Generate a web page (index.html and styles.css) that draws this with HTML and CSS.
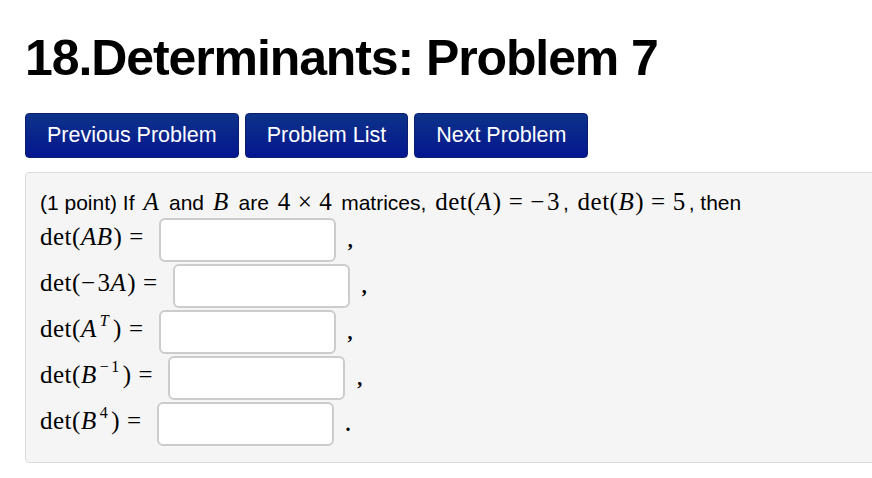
FILE: index.html
```html
<!DOCTYPE html>
<html>

<head>
  <meta charset="UTF-8">
  <title>18.Determinants: Problem 7</title>
  <link rel="stylesheet" href="styles.css">
</head>

<body>
  <h1 class="problem-title">18.Determinants: Problem 7</h1>

  <div class="nav-row">
    <a class="nav-button" href="#">Previous Problem</a>
    <a class="nav-button" href="#">Problem List</a>
    <a class="nav-button" href="#">Next Problem</a>
  </div>

  <div class="problem">
    <p class="intro">(1 point) If <span class="m"><i>A</i></span> and <span class="m"><i>B</i></span> are
      <span class="m">4<span class="op">&times;</span>4</span> matrices, <span class="m">det(<i>A</i>)<span class="op">=</span><span class="neg">&minus;</span>3</span>,
      <span class="m">det(<i>B</i>)<span class="op">=</span>5</span>, then</p>

    <div class="answer">
      <span class="m">det(<i>AB</i>)<span class="op">=</span></span>
      <input type="text" class="blank">
      <span class="sep">,</span>
    </div>
    <div class="answer">
      <span class="m">det(<span class="neg">&minus;</span>3<i>A</i>)<span class="op">=</span></span>
      <input type="text" class="blank">
      <span class="sep">,</span>
    </div>
    <div class="answer">
      <span class="m">det(<i>A</i><sup><i>T</i></sup>)<span class="op">=</span></span>
      <input type="text" class="blank">
      <span class="sep">,</span>
    </div>
    <div class="answer">
      <span class="m">det(<i>B</i><sup><span class="neg">&minus;</span>1</sup>)<span class="op">=</span></span>
      <input type="text" class="blank">
      <span class="sep">,</span>
    </div>
    <div class="answer">
      <span class="m">det(<i>B</i><sup>4</sup>)<span class="op">=</span></span>
      <input type="text" class="blank">
      <span class="sep">.</span>
    </div>
  </div>
</body>

</html>
```

FILE: styles.css
```css
html,
body {
  overflow: hidden;
}

body {
  margin: 0;
  padding: 0 0 0 25px;
  font-family: "Liberation Sans", Helvetica, sans-serif;
  background-color: white;
  color: black;
}

.problem-title {
  margin: 29px 0 0 0;
  font-size: 50px;
  line-height: 58px;
  font-weight: bold;
  letter-spacing: -1.1px;
}

.nav-row {
  display: flex;
  gap: 6px;
  margin-top: 26px;
}

.nav-button {
  display: block;
  box-sizing: border-box;
  height: 45px;
  padding: 0 21px;
  line-height: 43px;
  font-size: 21.5px;
  color: white;
  text-decoration: none;
  border: 1px solid #0a1e6e;
  border-radius: 4px;
  background: linear-gradient(#0d3389, #051690);
}

.problem {
  box-sizing: border-box;
  width: 870px;
  margin-top: 14px;
  padding: 15px 14px 15px 14px;
  border: 1px solid #dcdcdc;
  border-radius: 4px;
  background: #f5f5f5;
}

.intro {
  margin: 0;
  font-size: 21px;
  line-height: 28px;
}

.intro .m {
  margin: 0 3px;
}

.m {
  font-family: "Liberation Serif", "Times New Roman", serif;
  font-size: 25px;
  letter-spacing: 0.5px;
}

.m i {
  margin-right: 1px;
}

.m .neg {
  margin-right: 2px;
}

.m sup {
  font-size: 16px;
  line-height: 0;
  vertical-align: 11px;
  margin: 0 3px 0 2px;
}

.op {
  margin: 0 7px;
}

.answer {
  display: flex;
  align-items: center;
  height: 46px;
}

.answer .m {
  position: relative;
  top: -3px;
}

.blank {
  box-sizing: border-box;
  width: 177px;
  height: 44px;
  margin-left: 8px;
  border: 2px solid #cccccc;
  border-radius: 6px;
  background: white;
}

.sep {
  margin-left: 12px;
  font-family: "Liberation Serif", serif;
  font-size: 20px;
  font-weight: bold;
}
```
